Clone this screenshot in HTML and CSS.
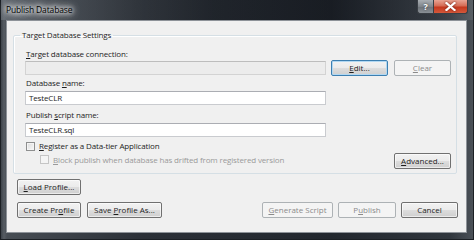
FILE: index.html
```html
<!DOCTYPE html>
<html>
<head>
<meta charset="utf-8">
<link rel="stylesheet" href="styles.css">
</head>
<body>
<div class="window">
  <div class="titlebar">
    <span class="title">Publish Database</span>
    <div class="caption-buttons">
      <div class="cap help">?</div>
      <div class="cap close">
        <svg width="11" height="9" viewBox="0 0 11 9"><path d="M1.5 1 L9.5 8 M9.5 1 L1.5 8" stroke="#fff" stroke-width="2.2" stroke-linecap="square"/></svg>
      </div>
    </div>
  </div>
  <div class="client">
    <fieldset class="group">
      <legend>Target Database Settings</legend>
      <div class="label l1"><u>T</u>arget database connection:</div>
      <div class="row conn">
        <div class="textbox readonly"></div>
        <button class="btn focus"><u>E</u>dit...</button>
        <button class="btn" disabled><u>C</u>lear</button>
      </div>
      <div class="label">Database <u>n</u>ame:</div>
      <div class="textbox field">TesteCLR</div>
      <div class="label l3">Publish <u>s</u>cript name:</div>
      <div class="textbox field">TesteCLR.sql</div>
      <label class="check c1"><span class="box"></span><span><u>R</u>egister as a Data-tier Application</span></label>
      <div class="row adv">
        <label class="check c2 disabled"><span class="box"></span><span><u>B</u>lock publish when database has drifted from registered version</span></label>
        <button class="btn"><u>A</u>dvanced...</button>
      </div>
    </fieldset>
    <div class="bottom">
      <div class="brow"><button class="btn wide"><u>L</u>oad Profile...</button></div>
      <div class="brow r2">
        <button class="btn wide">Create Pr<u>o</u>file</button>
        <button class="btn save">Save <u>P</u>rofile As...</button>
        <span class="spacer"></span>
        <button class="btn gen" disabled><u>G</u>enerate Script</button>
        <button class="btn pub" disabled>P<u>u</u>blish</button>
        <button class="btn cancel">Cancel</button>
      </div>
    </div>
  </div>
</div>
</body>
</html>
```

FILE: styles.css
```css
* { box-sizing: border-box; }
html, body { margin: 0; padding: 0; }
body {
  width: 474px;
  height: 240px;
  overflow: hidden;
  font-family: "Open Sans", "Noto Sans", sans-serif;
  font-size: 8px;
  letter-spacing: -0.15px;
  color: #1e1e1e;
}
u { text-decoration: underline; text-underline-offset: 1px; }
.window {
  width: 474px;
  height: 240px;
  display: flex;
  flex-direction: column;
  background: linear-gradient(to right, #3d434a 0px, #565c63 3px, #474d54 6px, #2b3037 30%, #22272e 70%, #30363d 95%, #4a5057 100%);
  border: 1px solid #1b1f24;
  border-top: none;
}
.titlebar {
  height: 20px;
  display: flex;
  align-items: flex-start;
  justify-content: space-between;
  padding-left: 5px;
  background: linear-gradient(to right, rgba(120,126,133,0.55) 0%, rgba(90,96,103,0.35) 15%, rgba(20,24,30,0.4) 45%, rgba(15,18,24,0.5) 70%, rgba(70,76,84,0.25) 92%, rgba(110,116,122,0.4) 100%);
}
.title {
  margin-top: 4px;
  line-height: 12px;
  font-size: 8.5px;
  color: #000;
  text-shadow: 0 0 4px #fff, 0 0 6px #fff, 0 0 8px rgba(255,255,255,0.9), 0 0 10px rgba(255,255,255,0.8);
}
.caption-buttons {
  display: flex;
  margin-right: 5px;
}
.cap {
  height: 14px;
  border: 1px solid #3a3f45;
  border-top: none;
  display: flex;
  align-items: center;
  justify-content: center;
}
.help {
  width: 16px;
  border-radius: 0 0 0 3px;
  background: linear-gradient(#a9aeb3, #80868c 50%, #6c7278 51%, #8a9096);
  color: #fff;
  font-weight: bold;
  font-size: 9px;
  text-shadow: 0 0 2px #333;
  border-right: none;
}
.close {
  width: 35px;
  border-radius: 0 0 3px 0;
  background: linear-gradient(#e8a393, #d56c55 45%, #c5381e 55%, #d4583b);
}
.close svg { filter: drop-shadow(0 0 1px #6b1a0c); }
.client {
  flex: 1;
  margin: 0 6px 6px 5px;
  background: #f0f0f0;
  border: 1px solid #8d9298;
  display: flex;
  flex-direction: column;
}
.group {
  margin: 8px 9px 0 6px;
  padding: 0 5px 4px 11px;
  border: 1px solid #d5dfe5;
  border-radius: 2px;
  box-shadow: inset 1px 1px 0 #fff;
  min-width: 0;
  display: flex;
  flex-direction: column;
}
.group legend {
  margin-left: -5px;
  padding: 0 2px;
  line-height: 12px;
  font-size: 8px;
}
.label {
  line-height: 13px;
  padding-left: 1px;
}
.l1 { margin-top: 6px; }
.l3 { margin-top: 3px; }
.row {
  display: flex;
  align-items: center;
}
.conn { height: 16px; }
.conn .textbox { width: 301px; margin-right: 5px; }
.conn .btn { width: 57px; }
.conn .btn + .btn { margin-left: 6px; }
.textbox {
  height: 14px;
  border: 1px solid #c9cbcf;
  border-top-color: #abadb3;
  background: #fff;
  line-height: 12px;
  padding-left: 3px;
}
.textbox.readonly { background: #ececec; border-color: #d3d3d3; border-top-color: #bdbdbd; }
.field { width: 301px; margin-top: 2px; }
.btn {
  height: 16px;
  padding: 0;
  font: inherit;
  font-size: 8px;
  line-height: 14px;
  color: #1e1e1e;
  border: 1px solid #707070;
  border-radius: 2px;
  background: linear-gradient(#f2f2f2 0%, #ebebeb 50%, #dddddd 51%, #cfcfcf 100%);
  box-shadow: inset 0 0 0 1px rgba(255,255,255,0.6);
  text-align: center;
}
.btn.focus {
  border-color: #3c7fb1;
  box-shadow: inset 0 0 0 1px #b2d8f2;
}
.btn:disabled {
  background: #f4f4f4;
  border-color: #adb2b5;
  color: #8b8b8b;
  box-shadow: none;
}
.check {
  display: flex;
  align-items: center;
  line-height: 14px;
}
.check .box {
  width: 9px;
  height: 9px;
  border: 1px solid #8e8f8f;
  background: linear-gradient(135deg, #dcdcdc, #f8f8f8);
  box-shadow: inset 0 0 0 1px #f4f4f4;
  margin-right: 4px;
}
.c1 { margin-top: 2px; padding-left: 1px; }
.adv {
  align-items: flex-start;
  justify-content: space-between;
}
.adv .btn { width: 57px; }
.c2 { padding-left: 15px; line-height: 13px; }
.check.disabled { color: #9a9a9a; }
.check.disabled .box { border-color: #c5c5c5; background: #f4f4f4; box-shadow: none; }
.bottom {
  margin: 5px 8px 0 10px;
  display: flex;
  flex-direction: column;
  gap: 7px;
}
.brow { display: flex; }
.wide { width: 64px; }
.save { width: 75px; margin-left: 6px; }
.spacer { flex: 1; }
.gen { width: 71px; }
.pub { width: 58px; margin-left: 5px; }
.cancel { width: 57px; margin-left: 5px; }
```
